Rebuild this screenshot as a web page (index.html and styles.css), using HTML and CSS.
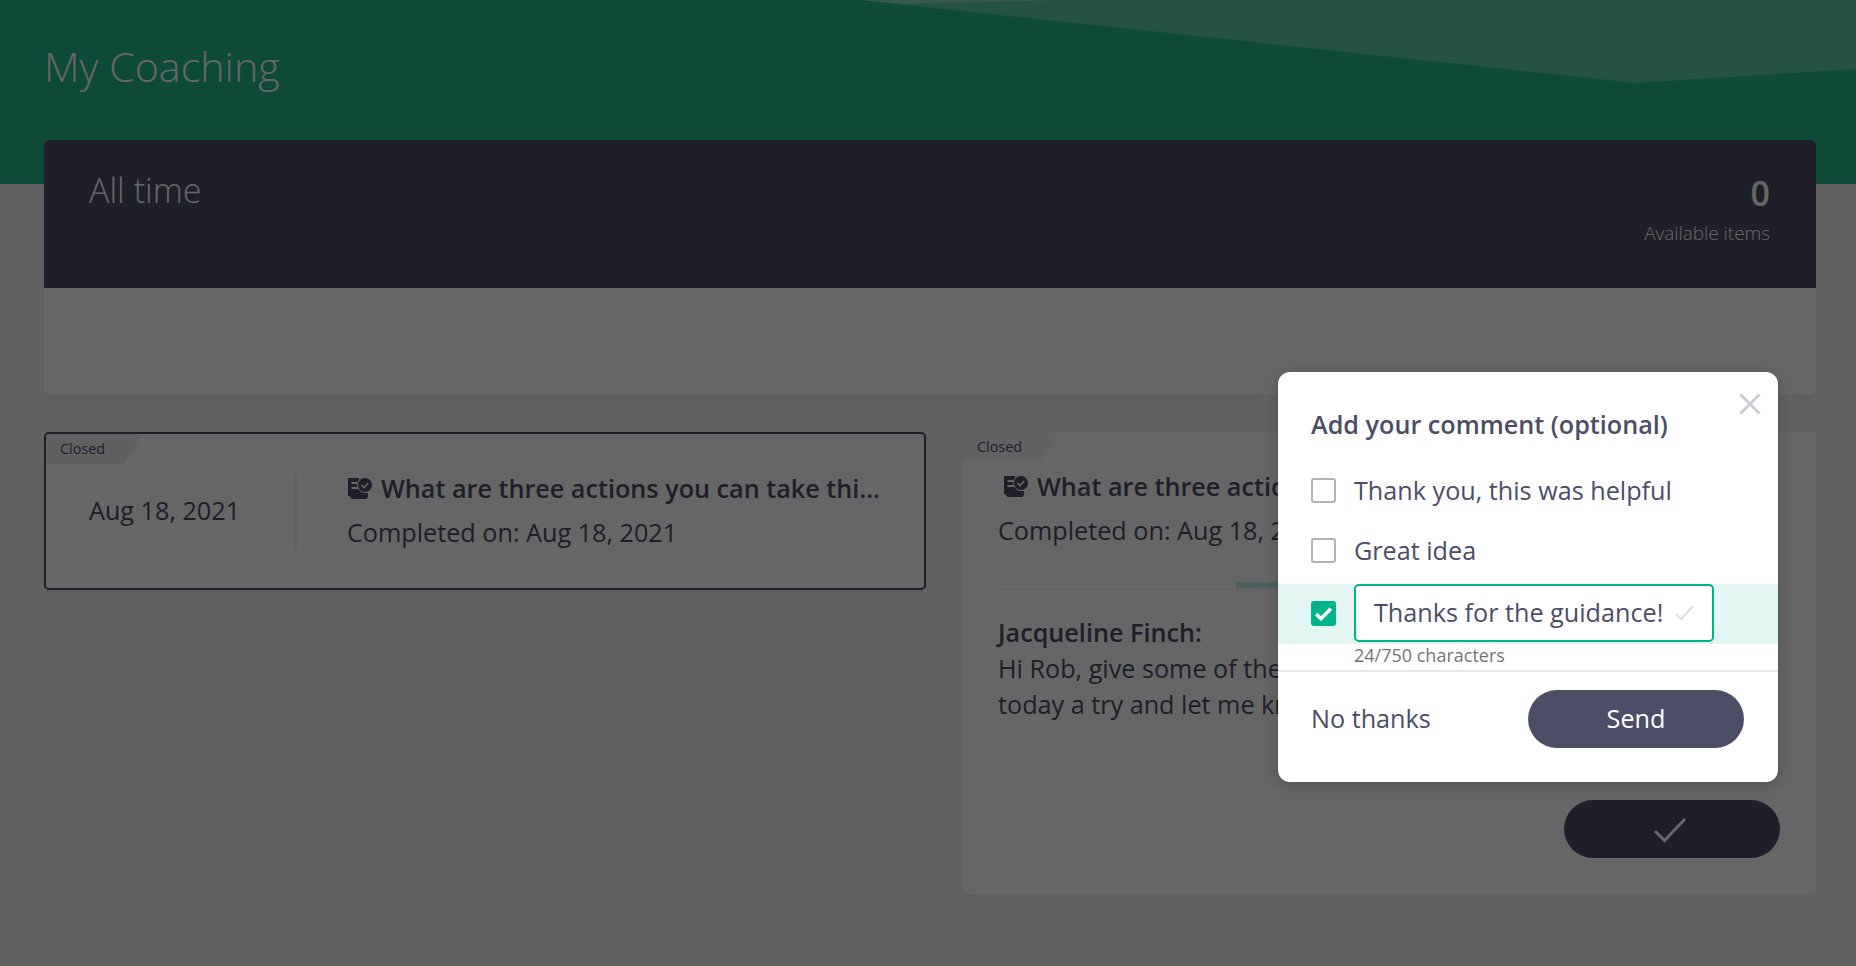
FILE: index.html
```html
<!DOCTYPE html>
<html lang="en">
<head>
  <meta charset="UTF-8" />
  <meta name="viewport" content="width=device-width, initial-scale=1.0" />
  <title>My Coaching</title>
  <link rel="stylesheet" href="styles.css">
</head>
<body>

  <!-- Header -->
  <header class="page-header">
    <svg class="page-header--waves" viewBox="0 0 1856 184" preserveAspectRatio="none" aria-hidden="true">
      <polygon points="0,184 0,125 900,60 1635,83 1856,107 1856,184" fill="#fff" opacity="0.012" />
      <polygon points="1635,83 1856,69 1856,107" fill="#fff" opacity="0.03" />
      <polygon points="860,0 1635,83 1856,69 1856,0" fill="#fff" opacity="0.28" />
      <polygon points="860,0 905,4 1060,0" fill="#fff" opacity="0.3" />
    </svg>
    <h1 class="page-header--title">My Coaching</h1>
  </header>

  <main class="page-content">

    <section class="summary">
      <div class="summary--top">
        <h2 class="summary--period">All time</h2>
        <div class="summary--count">
          <div class="summary--number">0</div>
          <div class="summary--label">Available items</div>
        </div>
      </div>
      <div class="summary--bottom"></div>
    </section>

    <section class="coach-grid">

      <article class="coach-card">
        <span class="closed-tab">Closed</span>
        <div class="coach-card--date">Aug 18, 2021</div>
        <div class="coach-card--body">
          <h3 class="coach-title">
            <svg class="coach-icon" viewBox="0 0 26 22" aria-hidden="true">
              <path d="M1 1h11v6a8 8 0 0 0 9 9v3a3 3 0 0 1-3 3H6c-2 0-3-1-3-3H1z" fill="#4b4e66" />
              <path d="M4.5 6H12M4.5 11H13" stroke="#fff" stroke-width="2" fill="none" />
              <circle cx="18" cy="8" r="7.5" fill="#4b4e66" stroke="#fff" stroke-width="1" />
              <path d="M14.5 8.2l2.5 2.4 4.2-4.6" stroke="#fff" stroke-width="1.7" fill="none" />
            </svg>
            What are three actions you can take thi...
          </h3>
          <p class="coach-meta">Completed on: Aug 18, 2021</p>
        </div>
      </article>

      <article class="coach-detail">
        <span class="closed-tab closed-tab--flat">Closed</span>
        <h3 class="coach-title">
          <svg class="coach-icon" viewBox="0 0 26 22" aria-hidden="true">
            <path d="M1 1h11v6a8 8 0 0 0 9 9v3a3 3 0 0 1-3 3H6c-2 0-3-1-3-3H1z" fill="#4b4e66" />
            <path d="M4.5 6H12M4.5 11H13" stroke="#fff" stroke-width="2" fill="none" />
            <circle cx="18" cy="8" r="7.5" fill="#4b4e66" stroke="#fff" stroke-width="1" />
            <path d="M14.5 8.2l2.5 2.4 4.2-4.6" stroke="#fff" stroke-width="1.7" fill="none" />
          </svg>
          What are three actions you can take thi...
        </h3>
        <p class="coach-meta">Completed on: Aug 18, 2021</p>
        <div class="coach-progress"><div class="coach-progress--bar"></div></div>
        <div class="coach-comment">
          <strong>Jacqueline Finch:</strong><br>
          Hi Rob, give some of the actions we discussed<br>
          today a try and let me know how it goes
        </div>
        <div class="coach-actions">
          <button class="done-button" aria-label="Done">
            <svg viewBox="0 0 34 26" width="34" height="26" aria-hidden="true">
              <path d="M2 14l9.5 9.5L32 2" stroke="#fff" stroke-width="3" fill="none" />
            </svg>
          </button>
        </div>
      </article>

    </section>
  </main>

  <div class="overlay"></div>

  <!-- Modal -->
  <div class="comment-modal">
    <button class="comment-modal--close" aria-label="Close">
      <svg viewBox="0 0 22 22" width="22" height="22" aria-hidden="true">
        <path d="M1.5 1.5l19 19M20.5 1.5l-19 19" stroke="#c9cbd3" stroke-width="2.8" fill="none" />
      </svg>
    </button>
    <h2 class="comment-modal--title">Add your comment (optional)</h2>
    <label class="option"><span class="checkbox"></span>Thank you, this was helpful</label>
    <label class="option"><span class="checkbox"></span>Great idea</label>
    <div class="option option--active">
      <span class="checkbox checkbox--on">
        <svg viewBox="0 0 20 20" width="21" height="21" aria-hidden="true">
          <path d="M3 10.5l4.5 4.5L17 5.5" stroke="#fff" stroke-width="3.4" fill="none" />
        </svg>
      </span>
      <div class="option--input">
        <span class="option--text">Thanks for the guidance!</span>
        <svg viewBox="0 0 20 16" width="19" height="16" aria-hidden="true">
          <path d="M1 9l5.5 5.5L18.5 1" stroke="#dcdcdc" stroke-width="2" fill="none" />
        </svg>
      </div>
    </div>
    <div class="char-count">24/750 characters</div>
    <div class="comment-modal--footer">
      <a class="no-thanks" href="#">No thanks</a>
      <button class="send-button">Send</button>
    </div>
  </div>

</body>
</html>
```

FILE: styles.css
```css
* { box-sizing: border-box; margin: 0; padding: 0; }

html {
  font-family: 'Open Sans', sans-serif;
  background-color: #f5f5f5;
}

body {
  position: relative;
  height: 966px;
  overflow: hidden;
  color: #4b4e66;
}

.page-header {
  position: relative;
  height: 184px;
  background-color: #21ba8c;
  overflow: hidden;
}

.page-header--waves {
  position: absolute;
  top: 0;
  left: 0;
  width: 100%;
  height: 100%;
}

.page-header--title {
  position: relative;
  padding: 38px 0 0 44px;
  font-size: 41.2px;
  line-height: 56px;
  font-weight: 300;
  color: #fff;
}

.page-content {
  padding: 0 40px 0 44px;
  margin-top: -44px;
  position: relative;
}

.summary {
  background-color: #fff;
  border-radius: 5px;
  height: 255px;
  box-shadow: 0 2px 6px rgba(0,0,0,0.05);
  overflow: hidden;
}

.summary--top {
  height: 148px;
  padding: 25px 46px 0 45px;
  background-color: #4b4e66;
  color: #fff;
  display: flex;
  justify-content: space-between;
}

.summary--period {
  font-size: 34px;
  line-height: 50px;
  font-weight: 300;
}

.summary--count {
  text-align: right;
}

.summary--number {
  font-size: 34px;
  line-height: 54px;
  font-weight: 600;
  margin-top: 1px;
}

.summary--label {
  font-size: 18.9px;
  line-height: 26px;
  font-weight: 300;
}

.coach-grid {
  display: grid;
  grid-template-columns: 882px 854px;
  column-gap: 36px;
  align-items: start;
  margin-top: 37px;
}

.closed-tab {
  position: absolute;
  top: 0;
  left: 0;
  width: 96px;
  height: 30px;
  padding-left: 14px;
  font-size: 14.4px;
  line-height: 30px;
  background-color: #f0f0f0;
  clip-path: polygon(0 0, 100% 0, 82% 100%, 0 100%);
}

.closed-tab--flat {
  width: 95px;
  padding-left: 15px;
  background-color: #f5f5f5;
  clip-path: polygon(0 0, 100% 0, 83% 100%, 0 100%);
}

.coach-card {
  position: relative;
  height: 158px;
  display: flex;
  background-color: #fff;
  border: 2px solid #4b4e66;
  border-radius: 5px;
  box-shadow: 0 2px 6px rgba(0,0,0,0.05);
  overflow: hidden;
}

.coach-card--date {
  width: 251px;
  height: 76px;
  margin-top: 40px;
  padding-left: 43px;
  border-right: 3px solid #f0f0f0;
  font-size: 25.2px;
  line-height: 72px;
}

.coach-card--body {
  padding: 36px 0 0 50px;
}

.coach-title {
  display: flex;
  align-items: center;
  font-size: 25.2px;
  line-height: 36px;
  font-weight: 600;
  white-space: nowrap;
}

.coach-icon {
  width: 26px;
  height: 22px;
  margin: 0 8px 0 0;
  flex: none;
}

.coach-meta {
  font-size: 25.2px;
  line-height: 36px;
  margin-top: 8px;
  white-space: nowrap;
}

.coach-detail {
  position: relative;
  height: 462px;
  padding: 36px 36px 0 36px;
  background-color: #fff;
  border-radius: 0 5px 5px 5px;
  box-shadow: 0 2px 6px rgba(0,0,0,0.05);
}

.coach-detail .coach-title {
  padding-left: 5px;
}

.coach-progress {
  height: 42px;
  padding: 34px 0 0 238px;
  border-bottom: 1px solid #f2f2f2;
}

.coach-progress--bar {
  width: 300px;
  height: 6px;
  background-color: #c0eeee;
}

.coach-comment {
  height: 182px;
  padding-top: 24px;
  font-size: 25.2px;
  line-height: 36px;
  white-space: nowrap;
  border-bottom: 1px solid #f2f2f2;
}

.coach-comment strong {
  font-weight: 600;
}

.coach-actions {
  display: flex;
  justify-content: flex-end;
  margin-top: 28px;
}

.done-button {
  width: 216px;
  height: 58px;
  padding: 2px 4px 0 0;
  border: none;
  border-radius: 29px;
  background-color: #4b4e66;
  display: flex;
  align-items: center;
  justify-content: center;
}

.overlay {
  position: absolute;
  top: 0;
  left: 0;
  width: 100%;
  height: 100%;
  background: rgba(0,0,0,0.6);
}

.comment-modal {
  position: absolute;
  top: 372px;
  left: 1278px;
  width: 500px;
  height: 410px;
  padding-top: 32px;
  background-color: #fff;
  border-radius: 12px;
  box-shadow: 0 4px 16px rgba(0,0,0,0.2);
}

.comment-modal--close {
  position: absolute;
  top: 21px;
  right: 17px;
  width: 22px;
  height: 22px;
  border: none;
  background: none;
}

.comment-modal--title {
  padding-left: 33px;
  font-size: 25.2px;
  line-height: 40px;
  font-weight: 600;
}

.option {
  display: flex;
  align-items: center;
  padding-left: 33px;
  height: 60px;
  font-size: 25.2px;
}

.comment-modal--title + .option {
  margin-top: 16px;
}

.checkbox {
  width: 25px;
  height: 25px;
  margin-right: 18px;
  border: 2px solid #b3b3b3;
  border-radius: 3px;
  flex: none;
}

.checkbox--on {
  display: flex;
  align-items: center;
  justify-content: center;
  margin-top: -2px;
  border: none;
  background-color: #00b388;
}

.option--active {
  margin-top: 4px;
  background-color: #e3f6f1;
}

.option--input {
  width: 360px;
  height: 58px;
  margin-top: -2px;
  padding: 0 18px 0 18px;
  display: flex;
  align-items: center;
  justify-content: space-between;
  background-color: #fff;
  border: 2px solid #00b388;
  border-radius: 5px;
  white-space: nowrap;
}

.option--text {
  margin-top: -2px;
}

.char-count {
  padding-left: 76px;
  font-size: 18px;
  line-height: 24px;
  margin-top: -1px;
  color: #757575;
}

.comment-modal--footer {
  display: flex;
  align-items: center;
  justify-content: space-between;
  margin-top: 3px;
  padding: 18px 34px 0 33px;
  border-top: 2px solid #e6e6e6;
}

.no-thanks {
  color: #4b4e66;
  font-size: 25.2px;
  line-height: 32px;
  text-decoration: none;
  margin-top: -2px;
}

.send-button {
  width: 216px;
  height: 58px;
  padding-bottom: 2px;
  border: none;
  border-radius: 29px;
  background-color: #4b4e66;
  color: #fff;
  font-family: inherit;
  font-size: 25.2px;
}
```
